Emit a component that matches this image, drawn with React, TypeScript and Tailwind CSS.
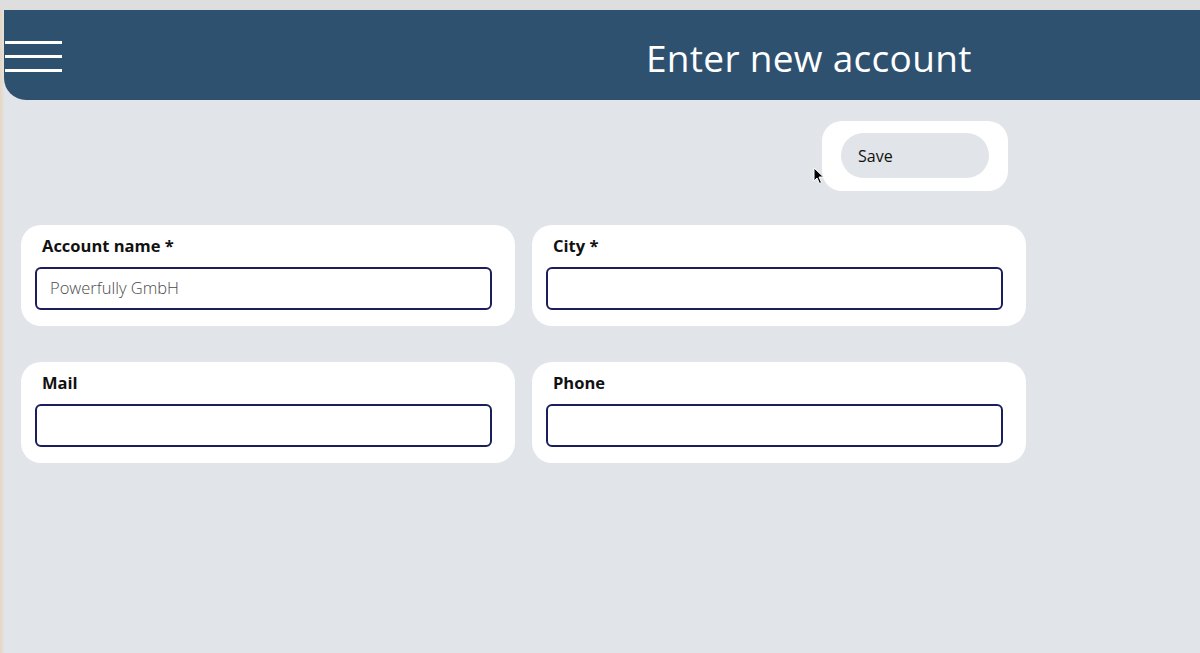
import React from "react";

function Field({ label, value }: { label: string; value?: string }) {
  return (
    <div className="w-[494px] h-[101px] bg-white rounded-[20px] pt-[11px] pl-[14px]">
      <div className="pl-[7px] h-[20px] text-[16.5px] leading-[20px] font-bold text-[#111]">{label}</div>
      <div className="mt-[11px] w-[457px] h-[43px] border-2 border-[#1a1f5c] rounded-[6px] flex items-center pl-[13px] text-[16.5px] text-[#4a4a4a] font-light">
        {value}
      </div>
    </div>
  );
}

export default function App() {
  return (
    <div
      className="w-[1200px] h-[653px] bg-[#e1e4e8] relative overflow-hidden"
      style={{ fontFamily: '"Open Sans", "Noto Sans", sans-serif' }}
    >
      <div className="h-[10px] bg-[#dedede]" />
      <div className="flex h-[643px]">
        <div className="w-[4px] bg-gradient-to-r from-[#e6d6c2] to-[#e3e2e0]" />
        <div className="flex-1 flex flex-col">
          <div className="h-[90px] bg-[#2e5170] rounded-bl-[22px] flex items-center">
            <div className="ml-[1px] w-[57px] flex flex-col gap-[11px] mt-[2px]">
              <div className="h-[3px] bg-white" />
              <div className="h-[3px] bg-white" />
              <div className="h-[3px] bg-white" />
            </div>
            <div className="ml-[584px] text-white text-[37px] tracking-[0.3px] leading-none mt-[4px]">Enter new account</div>
          </div>
          <div className="flex justify-start pl-[818px] mt-[21px]">
            <div className="w-[186px] h-[70px] bg-white rounded-[20px] pt-[12px] pl-[19px]">
              <div className="w-[148px] h-[45px] rounded-full bg-[#e1e4e8] flex items-center pl-[17px] text-[16px] text-[#111]">
                Save
              </div>
            </div>
          </div>
          <div className="pl-[17px] mt-[34px] flex flex-col gap-[36px]">
            <div className="flex gap-[17px]">
              <Field label="Account name *" value="Powerfully GmbH" />
              <Field label="City *" />
            </div>
            <div className="flex gap-[17px]">
              <Field label="Mail" />
              <Field label="Phone" />
            </div>
          </div>
        </div>
      </div>
      <svg className="absolute left-[813px] top-[167px]" width="12" height="18" viewBox="0 0 12 18">
        <path d="M1 1 L1 14 L4 11 L6.5 16.5 L8.5 15.5 L6 10 L10.5 10 Z" fill="#000" stroke="#fff" strokeWidth="1" />
      </svg>
    </div>
  );
}
